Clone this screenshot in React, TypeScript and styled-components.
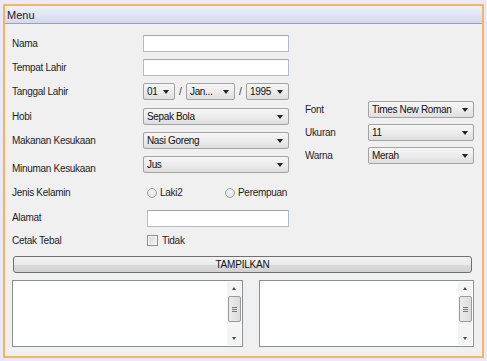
import React from 'react';
import styled, { createGlobalStyle } from 'styled-components';

const GlobalStyle = createGlobalStyle`
  html, body {
    margin: 0;
    padding: 0;
    background: #e9e9f9;
  }
  body {
    font-family: "Liberation Sans", Arial, sans-serif;
    font-size: 10px;
    color: #1e1e1e;
  }
`;

const Page = styled.div`
  width: 487px;
  height: 361px;
  padding: 4px 3px 3px 3px;
  box-sizing: border-box;
  background: #e9e9f9;
`;

const Window = styled.div`
  width: 481px;
  height: 354px;
  box-sizing: border-box;
  border: 2px solid #f6b55a;
  background: #f0f0f0;
  display: flex;
  flex-direction: column;
`;

const TitleBar = styled.div`
  height: 17px;
  display: flex;
  align-items: center;
  padding-left: 2px;
  font-size: 11px;
  color: #1a1a2a;
  background: linear-gradient(#edf0f9 0%, #e2e7f4 45%, #d3daed 100%);
  border-bottom: 1px solid #9aa0b4;
`;

const Content = styled.div`
  flex: 1;
  padding: 11px 0 0 7px;
  display: flex;
  flex-direction: column;
`;

const Top = styled.div`
  display: flex;
`;

const LeftForm = styled.div`
  width: 277px;
  display: flex;
  flex-direction: column;
`;

const Row = styled.div<{ $mt?: number }>`
  display: flex;
  align-items: center;
  height: 17px;
  margin-top: ${p => p.$mt ?? 0}px;
`;

const Label = styled.div<{ $w?: number; $dy?: number }>`
  width: ${p => p.$w ?? 131}px;
  flex: none;
  position: relative;
  top: ${p => p.$dy ?? 0}px;
  letter-spacing: -0.3px;
`;

const Field = styled.div<{ $indent?: number; $w?: number }>`
  margin-left: ${p => p.$indent ?? 0}px;
  width: ${p => p.$w ?? 146}px;
  height: 17px;
  box-sizing: border-box;
  background: #fff;
  border: 1px solid #b5b9c3;
  border-top-color: #9ea3ad;
  border-radius: 1px;
`;

const Combo = styled.div<{ $w: number }>`
  width: ${p => p.$w}px;
  height: 17px;
  box-sizing: border-box;
  border: 1px solid #a3a3a3;
  border-radius: 2px;
  background: linear-gradient(#f6f6f6 0%, #ececec 50%, #dedede 100%);
  display: flex;
  align-items: center;
  padding: 0 5px 0 3px;
  color: #111;
  white-space: nowrap;
`;

const ComboText = styled.span`
  flex: 1;
  overflow: hidden;
  letter-spacing: -0.35px;
`;

const Arrow = styled.span`
  width: 0;
  height: 0;
  border-left: 3.5px solid transparent;
  border-right: 3.5px solid transparent;
  border-top: 4px solid #222;
  margin-top: 1px;
`;

const DateGroup = styled.div`
  display: flex;
  align-items: center;
`;

const Slash = styled.span`
  width: 11px;
  text-align: center;
  color: #333;
`;

const Options = styled.div`
  display: flex;
  align-items: center;
  margin-left: 4px;
  letter-spacing: -0.3px;
`;

const Choice = styled.label<{ $w?: number }>`
  display: flex;
  align-items: center;
  width: ${p => (p.$w ? `${p.$w}px` : 'auto')};
`;

const Radio = styled.span`
  width: 10px;
  height: 10px;
  box-sizing: border-box;
  border-radius: 50%;
  border: 1px solid #9b9d9f;
  background: radial-gradient(circle at 50% 40%, #f6f6f6 0%, #dcdcdc 100%);
  margin-right: 3px;
`;

const Check = styled.span`
  width: 11px;
  height: 11px;
  box-sizing: border-box;
  border: 1px solid #8f8f8f;
  background: linear-gradient(135deg, #d8d8d8 0%, #f4f4f4 100%);
  box-shadow: inset 0 0 0 1px #f4f4f4;
  margin-right: 4px;
`;

const RightPanel = styled.div`
  margin: 66px 0 0 16px;
  display: flex;
  flex-direction: column;
`;

const Button = styled.div`
  margin: 7px 0 0 1px;
  width: 459px;
  height: 17px;
  box-sizing: border-box;
  border: 1px solid #707070;
  border-radius: 3px;
  background: linear-gradient(#f3f3f3 0%, #ebebeb 50%, #dcdcdc 51%, #d2d2d2 100%);
  display: flex;
  align-items: center;
  justify-content: center;
  color: #111;
  letter-spacing: -0.2px;
`;

const Areas = styled.div`
  display: flex;
  gap: 16px;
  margin-top: 7px;
`;

const TextArea = styled.div<{ $w: number }>`
  width: ${p => p.$w}px;
  height: 67px;
  box-sizing: border-box;
  border: 1px solid #8a8e96;
  background: #fff;
  display: flex;
  justify-content: flex-end;
`;

const ScrollBar = styled.div`
  width: 14px;
  margin: 1px 1px 1px 0;
  display: flex;
  flex-direction: column;
  align-items: center;
  background: #f4f4f4;
`;

const ScrollArrow = styled.span<{ $up?: boolean }>`
  width: 0;
  height: 0;
  border-left: 2.5px solid transparent;
  border-right: 2.5px solid transparent;
  ${p => (p.$up ? 'border-bottom: 3px solid #4a4a4a;' : 'border-top: 3px solid #4a4a4a;')}
  margin: ${p => (p.$up ? '5px 0 0' : 'auto 0 5px')};
`;

const Thumb = styled.div`
  margin-top: 6px;
  width: 13px;
  height: 26px;
  box-sizing: border-box;
  border: 1px solid #9a9a9a;
  border-radius: 2px;
  background: linear-gradient(90deg, #ececec, #dcdcdc);
  display: flex;
  flex-direction: column;
  align-items: center;
  justify-content: center;
  gap: 1px;
`;

const Grip = styled.span`
  width: 5px;
  height: 1px;
  background: #777;
`;

const Select: React.FC<{ w: number; value: string }> = ({ w, value }) => (
  <Combo $w={w}>
    <ComboText>{value}</ComboText>
    <Arrow />
  </Combo>
);

const Scroll: React.FC = () => (
  <ScrollBar>
    <ScrollArrow $up />
    <Thumb>
      <Grip />
      <Grip />
      <Grip />
    </Thumb>
    <ScrollArrow />
  </ScrollBar>
);

export default function App() {
  return (
    <Page>
      <GlobalStyle />
      <Window>
        <TitleBar>Menu</TitleBar>
        <Content>
          <Top>
            <LeftForm>
              <Row>
                <Label>Nama</Label>
                <Field />
              </Row>
              <Row $mt={7}>
                <Label>Tempat Lahir</Label>
                <Field />
              </Row>
              <Row $mt={7}>
                <Label>Tanggal Lahir</Label>
                <DateGroup>
                  <Select w={32} value="01" />
                  <Slash>/</Slash>
                  <Select w={49} value="Jan..." />
                  <Slash>/</Slash>
                  <Select w={43} value="1995" />
                </DateGroup>
              </Row>
              <Row $mt={8}>
                <Label>Hobi</Label>
                <Select w={146} value="Sepak Bola" />
              </Row>
              <Row $mt={7}>
                <Label>Makanan Kesukaan</Label>
                <Select w={146} value="Nasi Goreng" />
              </Row>
              <Row $mt={7}>
                <Label $dy={4}>Minuman Kesukaan</Label>
                <Select w={146} value="Jus" />
              </Row>
              <Row $mt={11}>
                <Label>Jenis Kelamin</Label>
                <Options>
                  <Choice $w={78}>
                    <Radio />
                    Laki2
                  </Choice>
                  <Choice>
                    <Radio />
                    Perempuan
                  </Choice>
                </Options>
              </Row>
              <Row $mt={9}>
                <Label $dy={-1}>Alamat</Label>
                <Field $indent={4} $w={142} />
              </Row>
              <Row $mt={5}>
                <Label>Cetak Tebal</Label>
                <Options>
                  <Choice>
                    <Check />
                    Tidak
                  </Choice>
                </Options>
              </Row>
            </LeftForm>
            <RightPanel>
              <Row>
                <Label $w={63}>Font</Label>
                <Select w={106} value="Times New Roman" />
              </Row>
              <Row $mt={6}>
                <Label $w={63}>Ukuran</Label>
                <Select w={106} value="11" />
              </Row>
              <Row $mt={6}>
                <Label $w={63}>Warna</Label>
                <Select w={106} value="Merah" />
              </Row>
            </RightPanel>
          </Top>
          <Button>TAMPILKAN</Button>
          <Areas>
            <TextArea $w={231}>
              <Scroll />
            </TextArea>
            <TextArea $w={215}>
              <Scroll />
            </TextArea>
          </Areas>
        </Content>
      </Window>
    </Page>
  );
}
